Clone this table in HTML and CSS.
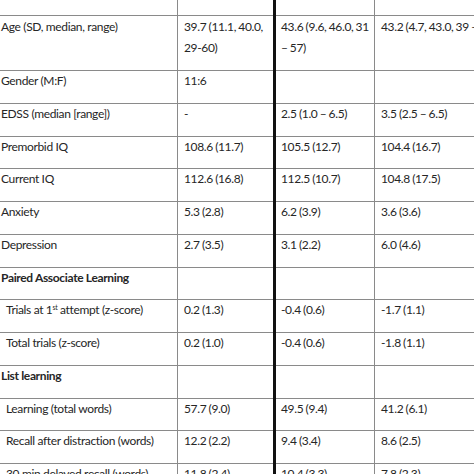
FILE: index.html
```html
<!DOCTYPE html>
<html>
<head>
<meta charset="utf-8">
<link rel="stylesheet" href="styles.css">
</head>
<body>
<div class="frame">
<table class="data">
<colgroup>
<col class="c1"><col class="c2"><col class="c3"><col class="c4">
</colgroup>
<tbody>
<tr class="head"><td></td><td></td><td class="thick"></td><td></td></tr>
<tr class="tall"><td>Age (SD, median, range)</td><td>39.7 (11.1, 40.0, 29-60)</td><td class="thick">43.6 (9.6, 46.0, 31 – 57)</td><td>43.2 (4.7, 43.0, 39 – 51)</td></tr>
<tr><td>Gender (M:F)</td><td>11:6</td><td class="thick"></td><td></td></tr>
<tr><td>EDSS (median [range])</td><td>-</td><td class="thick">2.5 (1.0 – 6.5)</td><td>3.5 (2.5 – 6.5)</td></tr>
<tr><td>Premorbid IQ</td><td>108.6 (11.7)</td><td class="thick">105.5 (12.7)</td><td>104.4 (16.7)</td></tr>
<tr><td>Current IQ</td><td>112.6 (16.8)</td><td class="thick">112.5 (10.7)</td><td>104.8 (17.5)</td></tr>
<tr><td>Anxiety</td><td>5.3 (2.8)</td><td class="thick">6.2 (3.9)</td><td>3.6 (3.6)</td></tr>
<tr><td>Depression</td><td>2.7 (3.5)</td><td class="thick">3.1 (2.2)</td><td>6.0 (4.6)</td></tr>
<tr><td class="section">Paired Associate Learning</td><td></td><td class="thick"></td><td></td></tr>
<tr><td class="sub">Trials at 1<sup>st</sup> attempt (z-score)</td><td>0.2 (1.3)</td><td class="thick">-0.4 (0.6)</td><td>-1.7 (1.1)</td></tr>
<tr><td class="sub">Total trials (z-score)</td><td>0.2 (1.0)</td><td class="thick">-0.4 (0.6)</td><td>-1.8 (1.1)</td></tr>
<tr><td class="section">List learning</td><td></td><td class="thick"></td><td></td></tr>
<tr><td class="sub">Learning (total words)</td><td>57.7 (9.0)</td><td class="thick">49.5 (9.4)</td><td>41.2 (6.1)</td></tr>
<tr><td class="sub">Recall after distraction (words)</td><td>12.2 (2.2)</td><td class="thick">9.4 (3.4)</td><td>8.6 (2.5)</td></tr>
<tr><td class="sub">30 min delayed recall (words)</td><td>11.8 (2.4)</td><td class="thick">10.4 (3.3)</td><td>7.8 (2.3)</td></tr>
</tbody>
</table>
</div>
</body>
</html>
```
FILE: styles.css
```css
html, body {
  margin: 0;
  padding: 0;
  background: #ffffff;
}
.frame {
  width: 474px;
  height: 474px;
  overflow: hidden;
  position: relative;
}
.data {
  border-collapse: collapse;
  table-layout: fixed;
  width: 600px;
  margin-left: -6px;
  margin-top: -26px;
  font-family: Lato, "Open Sans", sans-serif;
  font-size: 12px;
  letter-spacing: -0.35px;
  word-spacing: -0.5px;
  color: #262626;
}
.c1 { width: 183px; }
.c2 { width: 97px; }
.c3 { width: 100px; }
.c4 { width: 220px; }
.data tr {
  height: 32.75px;
}
.data tr.head {
  height: 40.5px;
}
.data tr.tall {
  height: 55.5px;
}
.data td {
  border: 1px solid #8a8a8a;
  padding: 0 0 0 6px;
  line-height: 19px;
  vertical-align: top;
}
.data tr.tall td {
  line-height: 21px;
}
.data td:first-child {
  word-spacing: 0;
}
.data td.thick {
  border-left: 3px solid #111111;
  padding-left: 5px;
}
.data td.section {
  font-weight: bold;
}
.data td.sub {
  padding-left: 11px;
}
.data sup {
  font-size: 7px;
  line-height: 0;
  vertical-align: 4px;
}
```
